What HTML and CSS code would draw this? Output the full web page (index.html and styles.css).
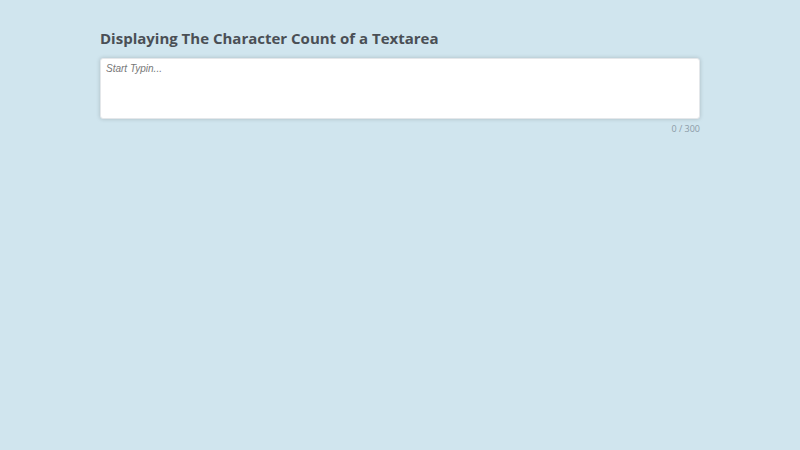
FILE: index.html
```html
<!DOCTYPE html>
<html lang="en">
<head>
    <meta charset="UTF-8">
    <meta name="viewport" content="width=device-width, initial-scale=1.0">
    <title>Character Count</title>
    <link rel="stylesheet" href="styles.css">
</head>
<body>
    <div class="wrapper">
        <h1>Displaying The Character Count of a Textarea</h1>
        <textarea id="message" maxlength="300" placeholder="Start Typin..."></textarea>
        <div class="counter"><span id="current">0</span> / 300</div>
    </div>

    <script>
        // update the counter as the user types
        const message = document.getElementById('message');
        message.addEventListener('input', function() {
            document.getElementById('current').textContent = this.value.length;
        });
    </script>
</body>
</html>
```

FILE: styles.css
```css
body {
    margin: 0;
    background-color: #d0e5ee;
    font-family: 'Open Sans', sans-serif;
}
.wrapper {
    width: 600px;
    margin: 0 auto;
    padding-top: 28px;
}
h1 {
    margin: 0 0 10px;
    font-size: 15px;
    line-height: 20px;
    font-weight: 700;
    color: #4a4f55;
}
textarea {
    display: block;
    width: 100%;
    height: 61px;
    padding: 4px 5px;
    border: 1px solid #e4e7ea;
    border-radius: 3px;
    box-sizing: border-box;
    box-shadow: 0 0 4px rgba(0,0,0,0.18);
    font-family: 'Liberation Sans', sans-serif;
    font-size: 10px;
    color: #333;
    resize: none;
    outline: none;
}
textarea::placeholder {
    font-style: italic;
    color: #777;
}
.counter {
    margin-top: 3px;
    text-align: right;
    font-size: 9px;
    color: #8c9ba6;
}
```
